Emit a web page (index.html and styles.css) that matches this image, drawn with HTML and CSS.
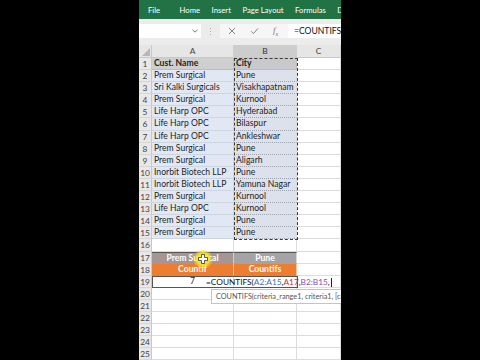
FILE: index.html
```html
<!DOCTYPE html>
<html>
<head>
<meta charset="utf-8">
<link rel="stylesheet" href="styles.css">
</head>
<body>
<div class="excel">
  <div class="ribbon">
    <span class="tab file">File</span>
    <span class="tab">Home</span>
    <span class="tab">Insert</span>
    <span class="tab">Page Layout</span>
    <span class="tab">Formulas</span>
    <span class="tab">D</span>
  </div>
  <div class="fbar">
    <div class="namebox">
      <svg width="6" height="4" viewBox="0 0 6 4"><path d="M0.5 0.8 L3 3.2 L5.5 0.8" fill="none" stroke="#666" stroke-width="0.9"/></svg>
    </div>
    <div class="grip"><i></i><i></i><i></i></div>
    <div class="fbtns">
      <svg width="8" height="8" viewBox="0 0 8 8"><path d="M1 1 L7 7 M7 1 L1 7" stroke="#777" stroke-width="0.9"/></svg>
      <svg width="9" height="8" viewBox="0 0 9 8"><path d="M1 4.2 L3.4 6.6 L8 1.4" fill="none" stroke="#777" stroke-width="0.9"/></svg>
      <span class="fx">f<sub>x</sub></span>
    </div>
    <div class="finput">=COUNTIFS(A2:A15,A17,B2:B15,</div>
  </div>
  <div class="sheet">
    <div class="corner"><svg width="8" height="8" viewBox="0 0 8 8"><path d="M8 0 L8 8 L0 8 Z" fill="#b8b8b8"/></svg></div>
    <div class="ch">A</div><div class="ch sel">B</div><div class="ch">C</div>

    <div class="rh">1</div><div class="c h1a">Cust. Name</div><div class="c h1b">City</div><div class="c"></div>
    <div class="rh">2</div><div class="c ta">Prem Surgical</div><div class="c tb">Pune</div><div class="c"></div>
    <div class="rh">3</div><div class="c ta">Sri Kalki Surgicals</div><div class="c tb">Visakhapatnam</div><div class="c"></div>
    <div class="rh">4</div><div class="c ta">Prem Surgical</div><div class="c tb">Kurnool</div><div class="c"></div>
    <div class="rh">5</div><div class="c ta">Life Harp OPC</div><div class="c tb">Hyderabad</div><div class="c"></div>
    <div class="rh">6</div><div class="c ta">Life Harp OPC</div><div class="c tb">Bilaspur</div><div class="c"></div>
    <div class="rh">7</div><div class="c ta">Life Harp OPC</div><div class="c tb">Ankleshwar</div><div class="c"></div>
    <div class="rh">8</div><div class="c ta">Prem Surgical</div><div class="c tb">Pune</div><div class="c"></div>
    <div class="rh">9</div><div class="c ta">Prem Surgical</div><div class="c tb">Aligarh</div><div class="c"></div>
    <div class="rh">10</div><div class="c ta">Inorbit Biotech LLP</div><div class="c tb">Pune</div><div class="c"></div>
    <div class="rh">11</div><div class="c ta">Inorbit Biotech LLP</div><div class="c tb">Yamuna Nagar</div><div class="c"></div>
    <div class="rh">12</div><div class="c ta">Prem Surgical</div><div class="c tb">Kurnool</div><div class="c"></div>
    <div class="rh">13</div><div class="c ta">Life Harp OPC</div><div class="c tb">Kurnool</div><div class="c"></div>
    <div class="rh">14</div><div class="c ta">Prem Surgical</div><div class="c tb">Pune</div><div class="c"></div>
    <div class="rh">15</div><div class="c ta">Prem Surgical</div><div class="c tb">Pune</div><div class="c"></div>
    <div class="rh">16</div><div class="c"></div><div class="c"></div><div class="c"></div>
    <div class="rh">17</div><div class="c g1">Prem Surgical</div><div class="c g2">Pune</div><div class="c"></div>
    <div class="rh">18</div><div class="c org">Countif</div><div class="c org">Countifs</div><div class="c"></div>
    <div class="rh">19</div><div class="c ctr">7</div><div class="c"></div><div class="c"></div>
    <div class="rh">20</div><div class="c"></div><div class="c"></div><div class="c"></div>
    <div class="rh">21</div><div class="c"></div><div class="c"></div><div class="c"></div>
    <div class="rh">22</div><div class="c"></div><div class="c"></div><div class="c"></div>
    <div class="rh">23</div><div class="c"></div><div class="c"></div><div class="c"></div>
    <div class="rh">24</div><div class="c"></div><div class="c"></div><div class="c"></div>
    <div class="rh">25</div><div class="c"></div><div class="c"></div><div class="c"></div>

    <div class="ants"></div>
    <div class="ebox"></div>
    <div class="editor">=COUNTIFS(<span class="r1">A2:A15</span>,<span class="r2">A17</span>,<span class="r3">B2:B15</span>,<span class="caret"></span></div>
    <div class="tip">COUNTIFS(criteria_range1, criteria1, [criteria_range2, criteria2], ...)</div>
    <div class="hl">
      <svg width="10" height="10" viewBox="0 0 10 10"><path d="M3.5 0.5 H6.5 V3.5 H9.5 V6.5 H6.5 V9.5 H3.5 V6.5 H0.5 V3.5 H3.5 Z" fill="#fff" stroke="#333" stroke-width="0.8"/></svg>
    </div>
  </div>
</div>
</body>
</html>
```
FILE: styles.css
```css
* { box-sizing: border-box; }
html, body { margin: 0; padding: 0; }
body {
  width: 480px;
  height: 360px;
  overflow: hidden;
  background: #000;
  display: flex;
  justify-content: center;
  font-family: Lato, "Liberation Sans", sans-serif;
}
.excel {
  width: 202px;
  height: 360px;
  background: #fff;
  position: relative;
  overflow: hidden;
  display: flex;
  flex-direction: column;
}
.ribbon {
  height: 19px;
  flex: none;
  background: #217346;
  color: #fff;
  font-size: 7.7px;
  display: flex;
  align-items: center;
  gap: 11.5px;
  padding-left: 9px;
  white-space: nowrap;
}
.tab.file { margin-right: 8px; }
.fbar {
  height: 26px;
  flex: none;
  background: #ececec;
  display: flex;
  align-items: center;
  padding-top: 5px;
  padding-bottom: 7px;
}
.namebox {
  width: 62px;
  height: 14px;
  background: #fff;
  display: flex;
  align-items: center;
  justify-content: flex-end;
  padding-right: 3px;
}
.grip {
  width: 19px;
  height: 14px;
  display: flex;
  flex-direction: column;
  align-items: center;
  justify-content: center;
  gap: 2px;
}
.grip i { width: 1px; height: 1px; background: #aaa; display: block; }
.fbtns {
  width: 68px;
  height: 14px;
  background: #f6f6f6;
  display: flex;
  align-items: center;
  gap: 14px;
  padding-left: 8px;
}
.fx {
  font-family: "Liberation Serif", serif;
  font-style: italic;
  color: #777;
  font-size: 9px;
  line-height: 1;
}
.fx sub { font-size: 6px; }
.finput {
  flex: 1;
  height: 14px;
  background: #fff;
  font-size: 8.6px;
  line-height: 14px;
  padding-left: 6px;
  white-space: nowrap;
  overflow: hidden;
  color: #111;
}
.sheet {
  flex: 1;
  position: relative;
  display: grid;
  grid-template-columns: 13px 82px 63px 1fr;
  grid-template-rows: 13px repeat(25, 12.1px);
  font-size: 8.6px;
  color: #1e1e1e;
}
.corner {
  background: #e6e6e6;
  border-right: 1px solid #c8c8c8;
  border-bottom: 1px solid #c8c8c8;
  display: flex;
  align-items: flex-end;
  justify-content: flex-end;
  padding: 0 1px 1px 0;
}
.ch {
  background: #e6e6e6;
  color: #444;
  font-size: 8.4px;
  text-align: center;
  line-height: 13px;
  border-right: 1px solid #cfcfcf;
  border-bottom: 1px solid #c8c8c8;
}
.ch.sel { background: #cdcdcd; color: #333; }
.rh {
  background: #e8e8e8;
  color: #444;
  text-align: center;
  font-size: 8.4px;
  line-height: 12px;
  border-right: 1px solid #c8c8c8;
  border-bottom: 1px solid #d6d6d6;
}
.c {
  border-right: 1px solid #dcdcdc;
  border-bottom: 1px solid #dcdcdc;
  line-height: 11.5px;
  padding-left: 2px;
  white-space: nowrap;
  overflow: visible;
}
.h1a { background: #cfcfcf; font-weight: bold; border-color: #bdbdbd; }
.h1b { background: #c9c9cc; font-weight: bold; border-color: #bdbdbd; }
.ta { background: #e2e8f3; border-color: #cdd4e2; }
.tb { background: #dde1ec; border-bottom: 1px dotted #9fa4b3; }
.g1, .g2, .org {
  color: #fff;
  font-weight: bold;
  text-align: center;
  padding-left: 0;
  border-right-color: rgba(255,255,255,0.55);
}
.g1 { background: #a59694; border-top: 1px solid #555; border-bottom-color: #a59694; }
.g2 { background: #a4a4a6; border-top: 1px solid #555; border-bottom-color: #a4a4a6; }
.org { background: #ed7d31; border-bottom-color: #ed7d31; }
.ctr { text-align: center; padding-left: 0; }
.ants {
  position: absolute;
  left: 95px;
  top: 13px;
  width: 64px;
  height: 182px;
  border: 1px dashed #3a3a3a;
}
.ebox {
  position: absolute;
  left: 13px;
  top: 230.8px;
  width: 146px;
  height: 12.6px;
  border: 1px solid #555;
}
.editor {
  position: absolute;
  left: 67px;
  top: 231px;
  height: 12px;
  line-height: 12px;
  font-size: 8.3px;
  white-space: nowrap;
  color: #111;
  display: flex;
  align-items: center;
}
.r1 { color: #3a6fc4; }
.r2 { color: #c9302c; }
.r3 { color: #8a4bb0; }
.caret { display: inline-block; width: 1px; height: 9px; background: #222; margin-left: 1px; }
.tip {
  position: absolute;
  left: 72px;
  top: 244px;
  height: 15px;
  padding: 0 4px;
  background: #fff;
  border: 1px solid #c4c4c4;
  font-size: 7.3px;
  line-height: 13px;
  color: #555;
  white-space: nowrap;
}
.hl {
  position: absolute;
  left: 54px;
  top: 204px;
  width: 20px;
  height: 20px;
  border-radius: 50%;
  background: radial-gradient(circle, rgba(255,240,70,1) 0%, rgba(255,228,40,0.85) 45%, rgba(255,220,0,0) 72%);
  display: flex;
  align-items: center;
  justify-content: center;
}
```
